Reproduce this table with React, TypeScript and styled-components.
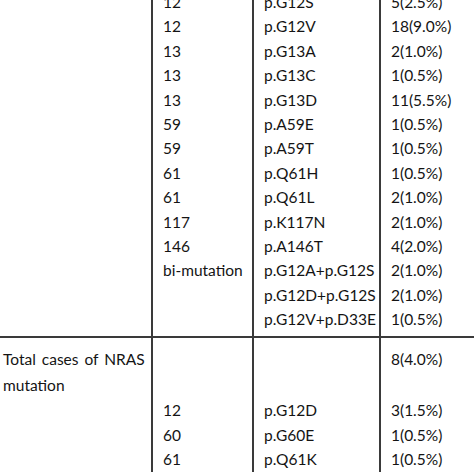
import React from 'react';
import styled, { createGlobalStyle } from 'styled-components';

const GlobalStyle = createGlobalStyle`
  html, body {
    margin: 0;
    padding: 0;
    background: #ffffff;
  }
  body {
    font-family: Lato, "Open Sans", sans-serif;
    color: #141414;
    overflow: hidden;
  }
`;

const Table = styled.div`
  width: 474px;
  margin-top: -10px;
  font-size: 15.5px;
`;

const Section = styled.div<{ ruled?: boolean }>`
  display: grid;
  grid-template-columns: 151px 101px 127px 1fr;
  border-bottom: ${p => (p.ruled ? '2px solid #3a3a3a' : 'none')};
`;

const Cell = styled.div<{ first?: boolean; padTop?: number; padBottom?: number }>`
  padding: ${p => p.padTop ?? 0}px 4px ${p => p.padBottom ?? 0}px ${p => (p.first ? 3 : 10)}px;
  border-left: ${p => (p.first ? 'none' : '2px solid #3a3a3a')};
  display: flex;
  flex-direction: column;
`;

const Line = styled.div<{ tall?: boolean }>`
  height: ${p => (p.tall ? 26 : 24.4)}px;
  line-height: ${p => (p.tall ? 26 : 24.4)}px;
  white-space: nowrap;
`;

const Label = styled(Line)`
  word-spacing: 2px;
`;

type Row = [string, string, string];

const kras: Row[] = [
  ['12', 'p.G12S', '5(2.5%)'],
  ['12', 'p.G12V', '18(9.0%)'],
  ['13', 'p.G13A', '2(1.0%)'],
  ['13', 'p.G13C', '1(0.5%)'],
  ['13', 'p.G13D', '11(5.5%)'],
  ['59', 'p.A59E', '1(0.5%)'],
  ['59', 'p.A59T', '1(0.5%)'],
  ['61', 'p.Q61H', '1(0.5%)'],
  ['61', 'p.Q61L', '2(1.0%)'],
  ['117', 'p.K117N', '2(1.0%)'],
  ['146', 'p.A146T', '4(2.0%)'],
  ['bi-mutation', 'p.G12A+p.G12S', '2(1.0%)'],
  ['', 'p.G12D+p.G12S', '2(1.0%)'],
  ['', 'p.G12V+p.D33E', '1(0.5%)'],
];

const nras: Row[] = [
  ['12', 'p.G12D', '3(1.5%)'],
  ['60', 'p.G60E', '1(0.5%)'],
  ['61', 'p.Q61K', '1(0.5%)'],
];

function Column({ rows, idx }: { rows: Row[]; idx: number }) {
  return (
    <>
      {rows.map((r, i) => (
        <Line key={i}>{r[idx]}</Line>
      ))}
    </>
  );
}

export default function App() {
  return (
    <>
      <GlobalStyle />
      <Table>
        <Section ruled>
          <Cell first padBottom={5} />
          <Cell padBottom={5}><Column rows={kras} idx={0} /></Cell>
          <Cell padBottom={5}><Column rows={kras} idx={1} /></Cell>
          <Cell padBottom={5}><Column rows={kras} idx={2} /></Cell>
        </Section>
        <Section>
          <Cell first padTop={8}>
            <Label tall>Total cases of NRAS</Label>
            <Label tall>mutation</Label>
          </Cell>
          <Cell padTop={8}>
            <Line tall />
            <Line tall />
            <Column rows={nras} idx={0} />
          </Cell>
          <Cell padTop={8}>
            <Line tall />
            <Line tall />
            <Column rows={nras} idx={1} />
          </Cell>
          <Cell padTop={8}>
            <Line tall>8(4.0%)</Line>
            <Line tall />
            <Column rows={nras} idx={2} />
          </Cell>
        </Section>
      </Table>
    </>
  );
}
